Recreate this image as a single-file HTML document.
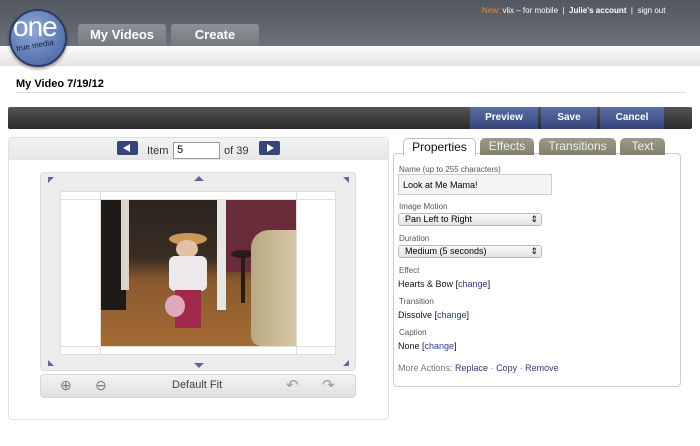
<!DOCTYPE html><html><head><style>
*{margin:0;padding:0;box-sizing:border-box}
body{width:700px;height:446px;background:#fff;font-family:"Liberation Sans",sans-serif;position:relative;overflow:hidden;font-size:11px}
.a{position:absolute}
.hdr{left:0;top:0;width:700px;height:46px;background:linear-gradient(#53575f,#6b7079)}
.band{left:0;top:46px;width:700px;height:20px;background:linear-gradient(#fdfdfd,#e3e3e3)}
.tab{top:24px;height:22px;background:linear-gradient(#8d9096,#777a81);color:#fff;font-weight:bold;font-size:13px;text-align:center;line-height:21px;border-radius:3px 3px 0 0}
.btn{top:107px;height:22px;background:linear-gradient(#5a6ea5,#34467c);color:#fff;font-weight:bold;font-size:10px;text-align:center;line-height:22px}
.rt{top:138px;height:17px;background:linear-gradient(#9c9b85,#818070);color:#eee;font-size:12px;text-align:center;line-height:17px;border-radius:5px 5px 0 0}
.lbl{color:#555;font-size:8px;left:399px}
.val{color:#111;font-size:9px;left:398px}
.lk{color:#2d3a86}
.sel{left:398px;width:144px;height:13px;border:1px solid #bbb;border-radius:3px;background:linear-gradient(#fafafa,#e2e2e2);font-size:9px;padding-left:6px;line-height:11px}
.tri{width:0;height:0;border-left:5px solid transparent;border-right:5px solid transparent}
</style></head><body>
<div class="a hdr"></div>
<div class="a band"></div>
<div class="a" style="left:9px;top:9px;width:58px;height:58px;border-radius:50%;background:radial-gradient(circle at 40% 35%,#8fa8d8,#3f5c9c);border:2px solid #2b3b63;box-shadow:0 2px 3px rgba(0,0,0,.4)"></div>
<div class="a" style="left:13px;top:11px;color:#fff;font-size:28px;letter-spacing:-1px">one</div>
<div class="a" style="left:16px;top:41px;color:#123;font-size:8px;transform:rotate(-10deg)">true media</div>
<div class="a tab" style="left:78px;width:88px">My Videos</div>
<div class="a tab" style="left:171px;width:88px">Create</div>
<div class="a" style="left:482px;top:6px;font-size:8px;color:#fff"><span style="color:#e98a2c">New:</span> vlix – for mobile &nbsp;| &nbsp;<b>Julie's account</b> &nbsp;| &nbsp;sign out</div>
<div class="a" style="left:16px;top:78px;font-weight:bold;font-size:11px">My Video 7/19/12</div>
<div class="a" style="left:16px;top:92px;width:670px;height:1px;background:#ddd"></div>
<div class="a" style="left:8px;top:107px;width:684px;height:22px;background:linear-gradient(#555,#2a2a2a);border-radius:2px"></div>
<div class="a btn" style="left:470px;width:68px">Preview</div>
<div class="a btn" style="left:541px;width:56px">Save</div>
<div class="a btn" style="left:600px;width:64px">Cancel</div>
<div class="a" style="left:8px;top:137px;width:381px;height:283px;border:1px solid #e0e0e0;border-radius:4px;background:#fff"></div>
<div class="a" style="left:9px;top:138px;width:379px;height:22px;background:linear-gradient(#f3f3f3,#e6e6e6)"></div>
<div class="a" style="left:117px;top:141px;width:21px;height:14px;background:#34467c;border-radius:2px"></div>
<div class="a" style="left:123px;top:144px;width:0;height:0;border-top:4px solid transparent;border-bottom:4px solid transparent;border-right:7px solid #fff"></div>
<div class="a" style="left:147px;top:145px;font-size:11px;color:#333">Item</div>
<div class="a" style="left:173px;top:142px;width:47px;height:17px;border:1px solid #999;background:#fff;font-size:11px;padding:1px 3px">5</div>
<div class="a" style="left:224px;top:145px;font-size:11px;color:#333">of 39</div>
<div class="a" style="left:259px;top:141px;width:21px;height:14px;background:#34467c;border-radius:2px"></div>
<div class="a" style="left:267px;top:144px;width:0;height:0;border-top:4px solid transparent;border-bottom:4px solid transparent;border-left:7px solid #fff"></div>
<div class="a" style="left:40px;top:172px;width:316px;height:199px;background:#ececec;border-radius:4px;border:1px solid #ddd"></div>
<div class="a" style="left:60px;top:191px;width:276px;height:164px;background:#fff;border:1px solid #ddd"></div>
<div class="a" style="left:60px;top:199px;width:276px;height:1px;background:#ddd"></div>
<div class="a" style="left:60px;top:346px;width:276px;height:1px;background:#ddd"></div>
<div class="a" style="left:100px;top:191px;width:1px;height:164px;background:#ddd"></div>
<div class="a" style="left:296px;top:191px;width:1px;height:164px;background:#ddd"></div>
<!-- photo -->
<div class="a" style="left:101px;top:200px;width:195px;height:146px;background:linear-gradient(#2a2420 0,#3b2d22 40%,#8a5a2e 55%,#a46b34 100%);overflow:hidden">
 <div class="a" style="left:0;top:0;width:25px;height:110px;background:#1e1a18"></div>
 <div class="a" style="left:20px;top:0;width:8px;height:90px;background:#d8d4cc"></div>
 <div class="a" style="left:123px;top:0;width:72px;height:72px;background:#6a2c38"></div>
 <div class="a" style="left:116px;top:0;width:9px;height:110px;background:#e8e6e2"></div>
 <div class="a" style="left:130px;top:50px;width:22px;height:8px;background:#2a1a16;border-radius:50%"></div>
 <div class="a" style="left:140px;top:58px;width:4px;height:45px;background:#2a1a16"></div>
 <div class="a" style="left:150px;top:30px;width:48px;height:116px;background:linear-gradient(90deg,#b8a882,#d8cba6);border-radius:18px 0 0 10px"></div>
 <div class="a" style="left:68px;top:33px;width:38px;height:12px;background:#c99a58;border-radius:50%"></div>
 <div class="a" style="left:75px;top:40px;width:22px;height:18px;background:#e4c0a8;border-radius:50%"></div>
 <div class="a" style="left:68px;top:56px;width:38px;height:35px;background:#ece8ec;border-radius:6px"></div>
 <div class="a" style="left:74px;top:90px;width:26px;height:38px;background:#a0284a"></div>
 <div class="a" style="left:64px;top:95px;width:20px;height:22px;background:#e0a8bc;border-radius:50%"></div>
</div>
<div class="a" style="left:48px;top:177px;border-top:6px solid #5c6a90;border-right:6px solid transparent"></div>
<div class="a" style="left:343px;top:177px;border-top:6px solid #5c6a90;border-left:6px solid transparent"></div>
<div class="a" style="left:48px;top:360px;border-bottom:6px solid #5c6a90;border-right:6px solid transparent"></div>
<div class="a" style="left:343px;top:360px;border-bottom:6px solid #5c6a90;border-left:6px solid transparent"></div>
<div class="a tri" style="left:194px;top:176px;border-bottom:5px solid #5c6a90"></div>
<div class="a tri" style="left:194px;top:363px;border-top:5px solid #5c6a90"></div>
<div class="a" style="left:40px;top:374px;width:316px;height:24px;background:linear-gradient(#f2f2f2,#e0e0e0);border-radius:4px;border:1px solid #d5d5d5"></div>
<div class="a" style="left:60px;top:377px;font-size:14px;color:#777">⊕</div>
<div class="a" style="left:95px;top:377px;font-size:14px;color:#777">⊖</div>
<div class="a" style="left:172px;top:379px;font-size:11px;color:#444">Default Fit</div>
<div class="a" style="left:286px;top:376px;font-size:15px;color:#999">↶</div>
<div class="a" style="left:322px;top:376px;font-size:15px;color:#999">↷</div>
<div class="a" style="left:393px;top:153px;width:288px;height:234px;border:1px solid #ccc;border-radius:4px;background:#fff"></div>
<div class="a rt" style="left:403px;width:73px;background:#fff;color:#111;border:1px solid #bbb;border-bottom:none;height:18px">Properties</div>
<div class="a rt" style="left:480px;width:54px">Effects</div>
<div class="a rt" style="left:539px;width:77px">Transitions</div>
<div class="a rt" style="left:620px;width:45px">Text</div>
<div class="a lbl" style="top:165px">Name (up to 255 characters)</div>
<div class="a" style="left:398px;top:174px;width:154px;height:21px;border:1px solid #ccc;background:#f4f4f4;font-size:9px;padding:5px 4px">Look at Me Mama!</div>
<div class="a lbl" style="top:202px">Image Motion</div>
<div class="a sel" style="top:213px">Pan Left to Right<span style="float:right;margin-right:3px">⇕</span></div>
<div class="a lbl" style="top:234px">Duration</div>
<div class="a sel" style="top:245px">Medium (5 seconds)<span style="float:right;margin-right:3px">⇕</span></div>
<div class="a lbl" style="top:266px">Effect</div>
<div class="a val" style="top:279px">Hearts &amp; Bow [<span class="lk">change</span>]</div>
<div class="a lbl" style="top:297px">Transition</div>
<div class="a val" style="top:310px">Dissolve [<span class="lk">change</span>]</div>
<div class="a lbl" style="top:328px">Caption</div>
<div class="a val" style="top:341px">None [<span class="lk">change</span>]</div>
<div class="a val" style="top:363px;color:#777">More Actions: <span class="lk">Replace</span> · <span class="lk">Copy</span> · <span class="lk">Remove</span></div>
</body></html>
